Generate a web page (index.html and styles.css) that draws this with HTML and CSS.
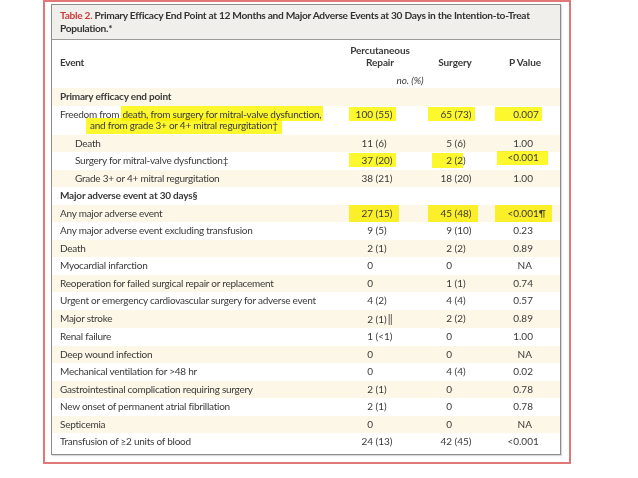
FILE: index.html
```html
<!DOCTYPE html>
<html>
<head>
<meta charset="utf-8">
<link rel="stylesheet" href="styles.css">
</head>
<body>
<div class="frame">
  <div class="tbl">
    <div class="title"><span class="tnum">Table 2.</span> Primary Efficacy End Point at 12 Months and Major Adverse Events at 30 Days in the Intention-to-Treat Population.*</div>
    <div class="head">
      <div class="hcell ev">Event</div>
      <div class="hcell c">Percutaneous<br>Repair</div>
      <div class="hcell c">Surgery</div>
      <div class="hcell c">P Value</div>
      <div class="unit">no. (%)</div>
    </div>
    <div class="row cream"><div class="ev b">Primary efficacy end point</div><div></div><div></div><div></div></div>
    <div class="row"><div class="ev wrap">Freedom from <span class="hl hl1">death, from surgery for mitral-valve dysfunction,</span><br><span class="cont"><span class="hl hl2">and from grade 3+ or 4+ mitral regurgitation†</span></span></div><div class="num"><span class="hl hv"><span class="n">100</span> (55)</span></div><div class="num s"><span class="hl hv"><span class="n">65</span> (73)</span></div><div class="pv"><span class="hl hv"><span class="i">0</span>.007</span></div></div>
    <div class="row cream"><div class="ev sub">Death</div><div class="num"><span class="n">11</span> (6)</div><div class="num s"><span class="n">5</span> (6)</div><div class="pv"><span class="i">1</span>.00</div></div>
    <div class="row"><div class="ev sub">Surgery for mitral-valve dysfunction‡</div><div class="num"><span class="hl hv"><span class="n">37</span> (20)</span></div><div class="num s"><span class="hl h22"><span class="n">2</span> (2</span>)</div><div class="pv"><span class="hl hp"><span class="i">&lt;0</span>.001</span></div></div>
    <div class="row cream"><div class="ev sub">Grade 3+ or 4+ mitral regurgitation</div><div class="num"><span class="n">38</span> (21)</div><div class="num s"><span class="n">18</span> (20)</div><div class="pv"><span class="i">1</span>.00</div></div>
    <div class="row"><div class="ev b">Major adverse event at 30 days§</div><div></div><div></div><div></div></div>
    <div class="row cream"><div class="ev">Any major adverse event</div><div class="num"><span class="hl hb"><span class="n">27</span> (15)</span></div><div class="num s"><span class="hl hb"><span class="n">45</span> (48)</span></div><div class="pv"><span class="hl hb"><span class="i">&lt;0</span>.001¶</span></div></div>
    <div class="row"><div class="ev">Any major adverse event excluding transfusion</div><div class="num"><span class="n">9</span> (5)</div><div class="num s"><span class="n">9</span> (10)</div><div class="pv"><span class="i">0</span>.23</div></div>
    <div class="row cream"><div class="ev">Death</div><div class="num"><span class="n">2</span> (1)</div><div class="num s"><span class="n">2</span> (2)</div><div class="pv"><span class="i">0</span>.89</div></div>
    <div class="row"><div class="ev">Myocardial infarction</div><div class="num"><span class="n">0</span></div><div class="num s"><span class="n">0</span></div><div class="pv na">NA</div></div>
    <div class="row cream"><div class="ev">Reoperation for failed surgical repair or replacement</div><div class="num"><span class="n">0</span></div><div class="num s"><span class="n">1</span> (1)</div><div class="pv"><span class="i">0</span>.74</div></div>
    <div class="row"><div class="ev">Urgent or emergency cardiovascular surgery for adverse event</div><div class="num"><span class="n">4</span> (2)</div><div class="num s"><span class="n">4</span> (4)</div><div class="pv"><span class="i">0</span>.57</div></div>
    <div class="row cream"><div class="ev">Major stroke</div><div class="num"><span class="n">2</span> (1)<span class="fn">‖</span></div><div class="num s"><span class="n">2</span> (2)</div><div class="pv"><span class="i">0</span>.89</div></div>
    <div class="row"><div class="ev">Renal failure</div><div class="num"><span class="n">1</span> (&lt;1)</div><div class="num s"><span class="n">0</span></div><div class="pv"><span class="i">1</span>.00</div></div>
    <div class="row cream"><div class="ev">Deep wound infection</div><div class="num"><span class="n">0</span></div><div class="num s"><span class="n">0</span></div><div class="pv na">NA</div></div>
    <div class="row"><div class="ev">Mechanical ventilation for &gt;48 hr</div><div class="num"><span class="n">0</span></div><div class="num s"><span class="n">4</span> (4)</div><div class="pv"><span class="i">0</span>.02</div></div>
    <div class="row cream"><div class="ev">Gastrointestinal complication requiring surgery</div><div class="num"><span class="n">2</span> (1)</div><div class="num s"><span class="n">0</span></div><div class="pv"><span class="i">0</span>.78</div></div>
    <div class="row"><div class="ev">New onset of permanent atrial fibrillation</div><div class="num"><span class="n">2</span> (1)</div><div class="num s"><span class="n">0</span></div><div class="pv"><span class="i">0</span>.78</div></div>
    <div class="row cream"><div class="ev">Septicemia</div><div class="num"><span class="n">0</span></div><div class="num s"><span class="n">0</span></div><div class="pv na">NA</div></div>
    <div class="row"><div class="ev">Transfusion of ≥2 units of blood</div><div class="num"><span class="n">24</span> (13)</div><div class="num s"><span class="n">42</span> (45)</div><div class="pv"><span class="i">&lt;0</span>.001</div></div>
  </div>
</div>
</body>
</html>
```

FILE: styles.css
```css
* { box-sizing: border-box; }
html, body { margin: 0; padding: 0; background: #fff; }
body {
  font-family: Lato, "Open Sans", sans-serif;
  color: #3a3a3a;
  font-size: 10px;
}
.frame {
  margin-left: 43px;
  width: 528px;
  height: 464px;
  border: 2px solid #e07878;
  padding: 2px 0 0 6px;
}
.tbl {
  width: 510px;
  border: 1px solid #8c8c8c;
  box-shadow: 1px 1px 1px rgba(0,0,0,0.15);
  padding-bottom: 3px;
  isolation: isolate;
}
.title {
  background: #f1efeb;
  border-bottom: 1px solid #9a9a9a;
  padding: 4px 10px 4px 8px;
  height: 35px;
  line-height: 13px;
  font-weight: bold;
  font-size: 10.2px;
  letter-spacing: -0.3px;
  color: #333;
}
.tnum { color: #cc3b3b; }
.head {
  display: grid;
  grid-template-columns: 288px 80px 70px 70px;
  padding: 4px 0 2px;
  line-height: 12px;
  letter-spacing: -0.1px;
}
.hcell { font-weight: bold; align-self: end; }
.hcell.ev { padding-left: 8px; }
.hcell.c { text-align: center; }
.unit {
  grid-column: 2 / 4;
  text-align: center;
  font-style: italic;
  padding-right: 10px;
  margin-top: 6px;
}
.row {
  display: grid;
  grid-template-columns: 288px 80px 70px 70px;
  line-height: 11.5px;
  padding: 3px 0;
}
.row.cream { background: #fdf7e8; }
.ev { padding-left: 8px; white-space: nowrap; letter-spacing: -0.25px; }
.ev.sub { padding-left: 23px; }
.ev.b { font-weight: bold; letter-spacing: -0.2px; }
.cont { padding-left: 30px; }
.num { padding-left: 13px; white-space: nowrap; }
.num.s { padding-left: 12px; }
.n { display: inline-block; width: 20px; text-align: right; }
.pv { padding-left: 9px; white-space: nowrap; }
.i { display: inline-block; width: 20px; text-align: right; }
.pv.na { padding-left: 0; padding-right: 28px; text-align: right; }
.fn { font-size: 11px; margin-left: 1px; }
.hl { background: #fdf72e; mix-blend-mode: multiply; }
.hl1 { padding: 2px 2px 1px 1px; }
.hl2 { padding: 1px 4px 3px 4px; margin-left: -4px; }
.hv { padding: 1px 3px 1px 0; margin-left: -4px; padding-left: 4px; }
.h22 { padding: 1px 0 2px; }
.hp { padding: 0 9px 2px 2px; position: relative; top: -3px; margin-left: -2px; }
.hb { padding: 2px 6px 3px 4px; margin-left: -4px; }
```
